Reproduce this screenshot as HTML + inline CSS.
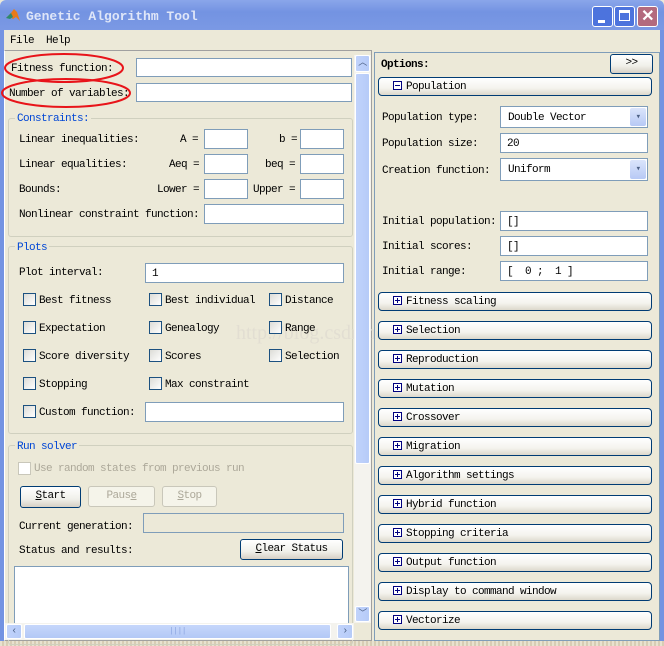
<!DOCTYPE html>
<html><head><meta charset="utf-8"><style>
*{box-sizing:border-box;margin:0;padding:0}
body{width:664px;height:646px;overflow:hidden;background:#ece9d8;font:11px "Liberation Mono","Noto Sans CJK SC",monospace;letter-spacing:-0.6px;color:#000;position:relative}
.a{position:absolute;white-space:nowrap}
.t{position:absolute;white-space:nowrap;line-height:12px;margin-top:1px}
.in{position:absolute;background:#fff;border:1px solid #7f9db9}
.cb{position:absolute;width:13px;height:13px;background:linear-gradient(135deg,#dcdcd7,#fff);border:1px solid #1c5180}
.grp{position:absolute;border:1px solid #d0d0bf;border-radius:3px}
.gt{position:absolute;background:#ece9d8;color:#0046d5;padding:0 2px;line-height:12px}
.btn{position:absolute;border:1px solid #003c74;border-radius:3px;background:linear-gradient(#fff,#f0f0ea 60%,#d6d0c5);text-align:center;line-height:19px}
.dis{border-color:#c9c7ba;color:#aca899;background:#f5f4ea}
.sec{position:absolute;left:378px;width:274px;height:19px;border:1px solid #003c74;border-radius:4px;background:linear-gradient(#fff,#f4f3ee 60%,#dcd8cc);line-height:18px;padding-left:14px}
.pm{display:inline-block;width:9px;height:9px;border:1px solid #000080;position:relative;margin-right:4px;vertical-align:-1px;background:#fff}
.pm:before{content:"";position:absolute;left:1px;top:3px;width:5px;height:1px;background:#000080}
.pm.p:after{content:"";position:absolute;left:3px;top:1px;width:1px;height:5px;background:#000080}
.dd{position:absolute;right:1px;top:1px;width:16px;bottom:1px;background:linear-gradient(#dbe5fb,#b7c9f5);border-radius:2px;color:#4d6185;font-size:9px;text-align:center;line-height:18px}
.sb{position:absolute;background:linear-gradient(90deg,#c1d3fb,#b6cbf8);border:1px solid #fff;border-radius:2px}
</style></head><body>
<div class="a" style="left:0;top:0;width:664px;height:30px;background:linear-gradient(#8aa6ea,#7393e2 40%,#7b99e4);border-radius:6px 6px 0 0"></div>
<div class="a" style="left:0;top:30px;width:4px;height:612px;background:#7393e2"></div>
<div class="a" style="left:660px;top:30px;width:4px;height:612px;background:#7393e2"></div>
<div class="a" style="left:0;top:641px;width:664px;height:5px;background:repeating-linear-gradient(90deg,#e8e2cf 0 2px,#d8cdb4 2px 4px)"></div>
<svg class="a" style="left:5px;top:7px" width="16" height="16"><path d="M1 11 L6 6 L9 2 L12 5 L15 14 L11 10 L8 12 L5 10Z" fill="#e87a1a"/><path d="M1 11 L6 6 L8 10 L5 12Z" fill="#2d8a6e"/></svg>
<div class="a" style="left:26px;top:9px;color:#dfe6f8;font-size:13px;letter-spacing:0;font-weight:bold;font-family:'Liberation Mono',monospace">Genetic Algorithm Tool</div>
<div class="a" style="left:592px;top:6px;width:21px;height:21px;border:1px solid #fff;border-radius:3px;background:#4c73dd"><div class="a" style="left:5px;top:13px;width:7px;height:3px;background:#fff"></div></div>
<div class="a" style="left:614px;top:6px;width:21px;height:21px;border:1px solid #fff;border-radius:3px;background:#4c73dd"><div class="a" style="left:4px;top:3px;width:11px;height:11px;border:1px solid #fff;border-top:3px solid #fff"></div></div>
<div class="a" style="left:637px;top:6px;width:21px;height:21px;border:1px solid #fff;border-radius:3px;background:#b36a7e;color:#fff;font:bold 16px 'Liberation Sans',sans-serif;text-align:center;line-height:19px">✕</div>
<div class="t" style="left:10px;top:34px">File</div>
<div class="t" style="left:46px;top:34px">Help</div>
<div class="a" style="left:4px;top:50px;width:368px;height:591px;border:1px solid #a0a0a0;border-left:1px solid #fff"></div>
<div class="t" style="left:11px;top:62px">Fitness function:</div>
<div class="in" style="left:136px;top:58px;width:216px;height:19px"></div>
<div class="t" style="left:9px;top:87px">Number of variables:</div>
<div class="in" style="left:136px;top:83px;width:216px;height:19px"></div>
<svg class="a" style="left:0;top:48px" width="140" height="65"><ellipse cx="64" cy="20" rx="59" ry="14" fill="none" stroke="#e8141a" stroke-width="2"/><ellipse cx="66" cy="45" rx="64" ry="14" fill="none" stroke="#e8141a" stroke-width="2"/></svg>
<div class="grp" style="left:8px;top:118px;width:345px;height:119px"></div>
<div class="gt" style="left:15px;top:113px">Constraints:</div>
<div class="t" style="left:19px;top:133px">Linear inequalities:</div>
<div class="t" style="left:180px;top:133px">A =</div><div class="in" style="left:204px;top:129px;width:44px;height:20px"></div>
<div class="t" style="left:279px;top:133px">b =</div><div class="in" style="left:300px;top:129px;width:44px;height:20px"></div>
<div class="t" style="left:169px;top:158px">Aeq =</div><div class="in" style="left:204px;top:154px;width:44px;height:20px"></div>
<div class="t" style="left:19px;top:158px">Linear equalities:</div>
<div class="t" style="left:265px;top:158px">beq =</div><div class="in" style="left:300px;top:154px;width:44px;height:20px"></div>
<div class="t" style="left:19px;top:183px">Bounds:</div>
<div class="t" style="left:157px;top:183px">Lower =</div><div class="in" style="left:204px;top:179px;width:44px;height:20px"></div>
<div class="t" style="left:253px;top:183px">Upper =</div><div class="in" style="left:300px;top:179px;width:44px;height:20px"></div>
<div class="t" style="left:19px;top:208px">Nonlinear constraint function:</div>
<div class="in" style="left:204px;top:204px;width:140px;height:20px"></div>
<div class="grp" style="left:8px;top:246px;width:345px;height:188px"></div>
<div class="gt" style="left:15px;top:242px">Plots</div>
<div class="t" style="left:19px;top:266px">Plot interval:</div>
<div class="in" style="left:145px;top:263px;width:199px;height:20px;padding:4px 0 0 6px">1</div>
<div class="a" style="left:236px;top:322px;color:#e2ded2;letter-spacing:0;font:20px 'Liberation Serif',serif">http://blog.csdn.net/</div>
<div class="cb" style="left:23px;top:293px"></div><div class="t" style="left:39px;top:294px">Best fitness</div>
<div class="cb" style="left:149px;top:293px"></div><div class="t" style="left:165px;top:294px">Best individual</div>
<div class="cb" style="left:269px;top:293px"></div><div class="t" style="left:285px;top:294px">Distance</div>
<div class="cb" style="left:23px;top:321px"></div><div class="t" style="left:39px;top:322px">Expectation</div>
<div class="cb" style="left:149px;top:321px"></div><div class="t" style="left:165px;top:322px">Genealogy</div>
<div class="cb" style="left:269px;top:321px"></div><div class="t" style="left:285px;top:322px">Range</div>
<div class="cb" style="left:23px;top:349px"></div><div class="t" style="left:39px;top:350px">Score diversity</div>
<div class="cb" style="left:149px;top:349px"></div><div class="t" style="left:165px;top:350px">Scores</div>
<div class="cb" style="left:269px;top:349px"></div><div class="t" style="left:285px;top:350px">Selection</div>
<div class="cb" style="left:23px;top:377px"></div><div class="t" style="left:39px;top:378px">Stopping</div>
<div class="cb" style="left:149px;top:377px"></div><div class="t" style="left:165px;top:378px">Max constraint</div>
<div class="cb" style="left:23px;top:405px"></div><div class="t" style="left:39px;top:406px">Custom function:</div>
<div class="in" style="left:145px;top:402px;width:199px;height:20px"></div>
<div class="grp" style="left:8px;top:445px;width:345px;height:200px"></div>
<div class="gt" style="left:15px;top:441px">Run solver</div>
<div class="a" style="left:18px;top:462px;width:13px;height:13px;border:1px solid #c9c7ba;background:#fff"></div>
<div class="t" style="left:34px;top:462px;color:#aca899">Use random states from previous run</div>
<div class="btn" style="left:20px;top:486px;width:61px;height:22px"><u>S</u>tart</div>
<div class="btn dis" style="left:88px;top:486px;width:67px;height:21px">Paus<u>e</u></div>
<div class="btn dis" style="left:162px;top:486px;width:55px;height:21px"><u>S</u>top</div>
<div class="t" style="left:19px;top:520px">Current generation:</div>
<div class="a" style="left:143px;top:513px;width:201px;height:20px;border:1px solid #7f9db9;background:#ece9d8"></div>
<div class="t" style="left:19px;top:544px">Status and results:</div>
<div class="btn" style="left:240px;top:539px;width:103px;height:21px"><u>C</u>lear Status</div>
<div class="in" style="left:14px;top:566px;width:335px;height:60px;border-bottom:none"></div>
<div class="a" style="left:354px;top:55px;width:17px;height:568px;background:#f4f3ee"></div>
<div class="sb" style="left:355px;top:55px;width:15px;height:17px;color:#4d6185;font-size:9px;text-align:center;line-height:15px">︿</div>
<div class="sb" style="left:355px;top:73px;width:15px;height:391px"></div>
<div class="sb" style="left:355px;top:606px;width:15px;height:16px;color:#4d6185;font-size:9px;text-align:center;line-height:14px">﹀</div>
<div class="a" style="left:5px;top:623px;width:349px;height:17px;background:#f4f3ee"></div>
<div class="sb" style="left:6px;top:624px;width:16px;height:15px;color:#4d6185;font-size:10px;text-align:center;line-height:13px">‹</div>
<div class="sb" style="left:24px;top:624px;width:307px;height:15px;background:linear-gradient(#c6d7fb,#b3c8f6);color:#8aa4e0;text-align:center;line-height:13px;font-size:8px">||||</div>
<div class="sb" style="left:337px;top:624px;width:16px;height:15px;color:#4d6185;font-size:10px;text-align:center;line-height:13px">›</div>
<div class="a" style="left:374px;top:52px;width:286px;height:589px;border:1px solid #7f9db9"></div>
<div class="t" style="left:381px;top:58px;font-weight:bold">Options:</div>
<div class="btn" style="left:610px;top:54px;width:43px;height:20px;line-height:17px">&gt;&gt;</div>
<div class="sec" style="top:77px"><span class="pm"></span>Population</div>
<div class="t" style="left:382px;top:111px">Population type:</div>
<div class="in" style="left:500px;top:106px;width:148px;height:22px;padding:5px 0 0 7px">Double Vector<div class="dd">▾</div></div>
<div class="t" style="left:382px;top:137px">Population size:</div>
<div class="in" style="left:500px;top:133px;width:148px;height:20px;padding:4px 0 0 6px">20</div>
<div class="t" style="left:382px;top:164px">Creation function:</div>
<div class="in" style="left:500px;top:158px;width:148px;height:23px;padding:5px 0 0 7px">Uniform<div class="dd">▾</div></div>
<div class="t" style="left:382px;top:215px">Initial population:</div>
<div class="in" style="left:500px;top:211px;width:148px;height:20px;padding:4px 0 0 6px">[]</div>
<div class="t" style="left:382px;top:240px">Initial scores:</div>
<div class="in" style="left:500px;top:236px;width:148px;height:20px;padding:4px 0 0 6px">[]</div>
<div class="t" style="left:382px;top:265px">Initial range:</div>
<div class="in" style="left:500px;top:261px;width:148px;height:20px;padding:4px 0 0 6px">[ &nbsp;0 ; &nbsp;1 ]</div>
<div class="sec" style="top:292px"><span class="pm p"></span>Fitness scaling</div>
<div class="sec" style="top:321px"><span class="pm p"></span>Selection</div>
<div class="sec" style="top:350px"><span class="pm p"></span>Reproduction</div>
<div class="sec" style="top:379px"><span class="pm p"></span>Mutation</div>
<div class="sec" style="top:408px"><span class="pm p"></span>Crossover</div>
<div class="sec" style="top:437px"><span class="pm p"></span>Migration</div>
<div class="sec" style="top:466px"><span class="pm p"></span>Algorithm settings</div>
<div class="sec" style="top:495px"><span class="pm p"></span>Hybrid function</div>
<div class="sec" style="top:524px"><span class="pm p"></span>Stopping criteria</div>
<div class="sec" style="top:553px"><span class="pm p"></span>Output function</div>
<div class="sec" style="top:582px"><span class="pm p"></span>Display to command window</div>
<div class="sec" style="top:611px"><span class="pm p"></span>Vectorize</div>
</body></html>
